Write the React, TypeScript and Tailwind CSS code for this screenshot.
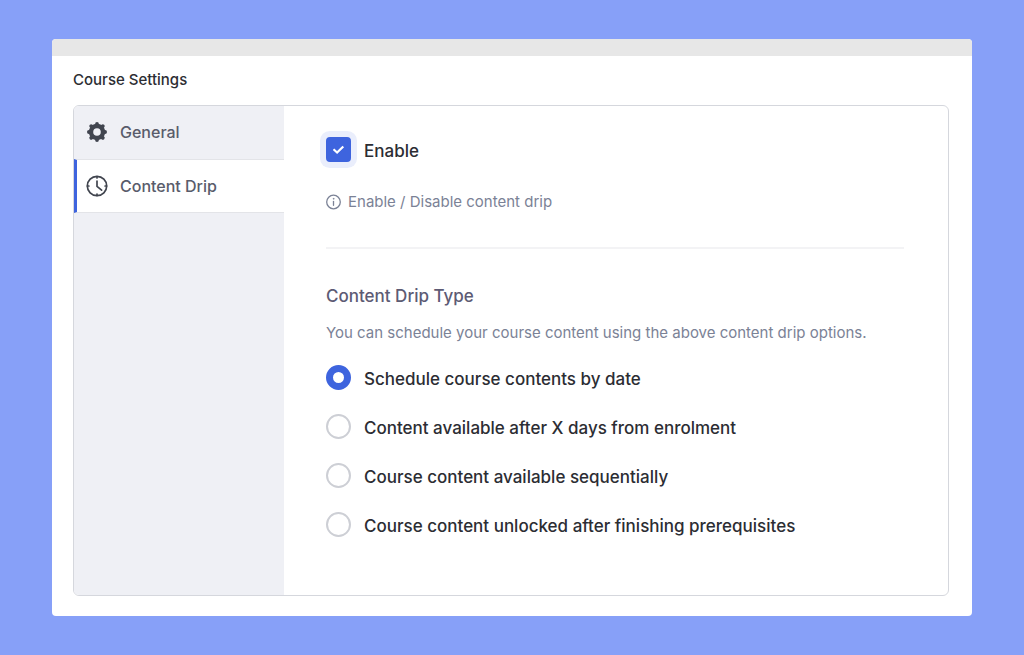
import React, { useState } from "react";

const tabs = [
  { name: "General", icon: GearIcon },
  { name: "Content Drip", icon: ClockIcon },
];

const dripTypes = [
  { value: "date", label: "Schedule course contents by date" },
  { value: "days", label: "Content available after X days from enrolment" },
  { value: "sequential", label: "Course content available sequentially" },
  {
    value: "prerequisites",
    label: "Course content unlocked after finishing prerequisites",
  },
];

function GearIcon() {
  return (
    <svg viewBox="0 0 22 22" className="h-[22px] w-[22px]" fill="none">
      <g stroke="#41454f" strokeWidth="3.8" strokeLinecap="round">
        <path d="M11 2.9v16.2M2.9 11h16.2M5.2 5.2l11.6 11.6M16.8 5.2L5.2 16.8" />
      </g>
      <circle cx="11" cy="11" r="8.2" fill="#41454f" />
      <circle cx="11" cy="11" r="3.8" fill="#eff0f5" />
    </svg>
  );
}

function ClockIcon() {
  return (
    <svg
      viewBox="0 0 22 22"
      className="h-[22px] w-[22px]"
      fill="none"
      stroke="#41454f"
      strokeWidth="1.7"
      strokeLinecap="round"
      strokeLinejoin="round"
    >
      <circle cx="11" cy="11" r="9.7" />
      <path d="M11 6v5.4l4.6 3.8" />
      <path d="M11 1.5v1.4M11 19.1v1.4M1.5 11h1.4M19.1 11h1.4" />
    </svg>
  );
}

function InfoIcon() {
  return (
    <svg
      viewBox="0 0 16 16"
      className="h-4 w-4"
      fill="none"
      stroke="#7b8296"
      strokeWidth="1.3"
      strokeLinecap="round"
    >
      <circle cx="7.5" cy="8" r="6.8" />
      <path d="M7.5 7.4v3.9" />
      <circle cx="7.5" cy="4.8" r="0.4" fill="#7b8296" strokeWidth="0.8" />
    </svg>
  );
}

function App() {
  const [tab, setTab] = useState("Content Drip");
  const [enabled, setEnabled] = useState(true);
  const [type, setType] = useState("date");

  return (
    <main className="flex min-h-screen flex-col bg-[#87a0f8] px-[52px] py-[39px] font-['Inter',sans-serif]">
      <div className="flex flex-1 flex-col overflow-hidden rounded-[4px] bg-white">
        <div className="h-[17px] bg-[#e7e7e7]" />
        <section className="flex flex-1 flex-col pt-3 pr-[23px] pb-5 pl-[21px]">
          <h1 className="text-[15px] leading-6 font-medium text-[#2c2d33]">
            Course Settings
          </h1>
          <div className="mt-[13px] flex flex-1 overflow-hidden rounded-md border border-[#d5d7dd]">
            <nav className="w-[210px] shrink-0 bg-[#eff0f5]">
              {tabs.map(({ name, icon: Icon }) => (
                <button
                  key={name}
                  type="button"
                  onClick={() => setTab(name)}
                  className={
                    tab === name
                      ? "flex h-[54px] w-full items-center gap-3 border-y border-l-[3px] border-y-[#e3e4e8] border-l-[#3e64de] bg-white pl-[9px] text-base font-medium text-[#595c6b]"
                      : "flex h-[53px] w-full items-center gap-3 border-l-[3px] border-l-transparent pb-px pl-[9px] text-base font-medium text-[#595c6b]"
                  }
                >
                  <Icon />
                  {name}
                </button>
              ))}
            </nav>

            <div className="min-w-0 flex-1 pt-[31px] pr-11 pb-6 pl-[42px]">
              <label className="flex items-start gap-[13px] text-[17px] leading-7 font-medium text-[#2c2d33]">
                <span className="relative h-[25px] w-[25px]">
                  <input
                    type="checkbox"
                    checked={enabled}
                    onChange={(e) => setEnabled(e.target.checked)}
                    className="peer block h-[25px] w-[25px] appearance-none rounded-[4px] border-2 border-[#cdcfd5] checked:border-[#3e64de] checked:bg-[#3e64de] checked:ring-6 checked:ring-[#eaeefc]"
                  />
                  <svg
                    viewBox="0 0 25 25"
                    className="pointer-events-none absolute inset-0 hidden peer-checked:block"
                    fill="none"
                    stroke="#fff"
                    strokeWidth="2.2"
                  >
                    <path d="M7.5 12.3l3.6 3.2 6.2-6" />
                  </svg>
                </span>
                Enable
              </label>
              <p className="mt-[25px] flex items-center gap-[6px] text-[15px] leading-6 text-[#7b8296]">
                <InfoIcon />
                Enable / Disable content drip
              </p>
              <hr className="mt-[33px] mb-[35px] border-t-2 border-[#f3f3f5]" />

              <fieldset>
                <legend className="text-[17px] leading-6 font-medium text-[#5d5b74]">
                  Content Drip Type
                </legend>
                <p className="mt-[13px] text-[15px] leading-6 text-[#7b8296]">
                  You can schedule your course content using the above content
                  drip options.
                </p>
                <div className="mt-5 flex flex-col gap-[21px]">
                  {dripTypes.map((item) => (
                    <label
                      key={item.value}
                      className="flex items-start gap-[13px] text-[17px] leading-7 font-medium text-[#2c2d33]"
                    >
                      <input
                        type="radio"
                        name="drip-type"
                        value={item.value}
                        checked={type === item.value}
                        onChange={() => setType(item.value)}
                        className="h-[25px] w-[25px] shrink-0 appearance-none rounded-full border-2 border-[#cdcfd5] bg-white checked:border-[7px] checked:border-[#3e64de]"
                      />
                      {item.label}
                    </label>
                  ))}
                </div>
              </fieldset>
            </div>
          </div>
        </section>
      </div>
    </main>
  );
}

export default App;
